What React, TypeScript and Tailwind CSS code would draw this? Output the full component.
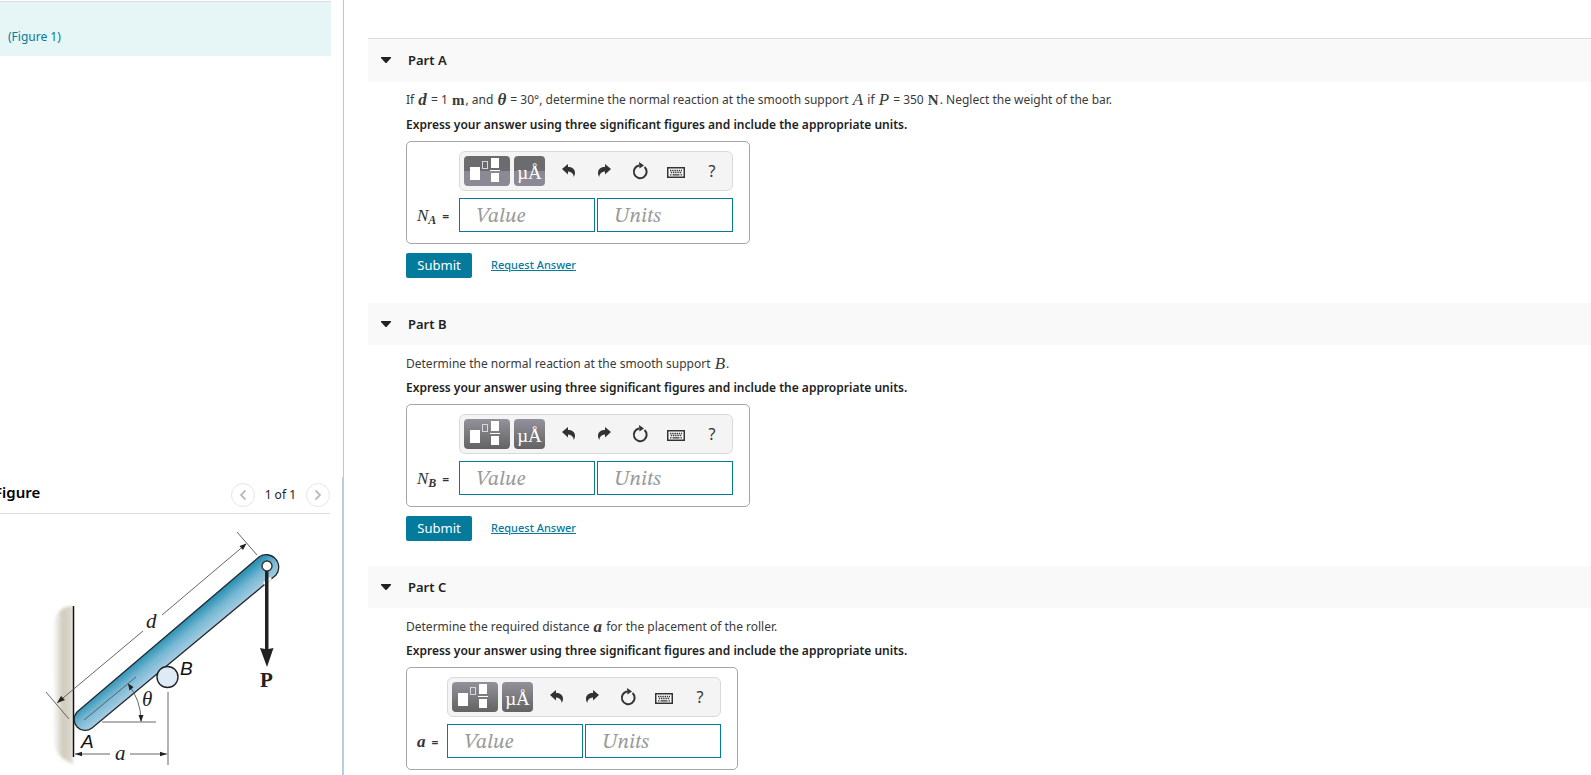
import React from "react";

const sans = "font-['Noto_Sans',sans-serif]";
const math = "font-['Liberation_Serif',serif]";
const serif = "font-['STIX_Two_Text','Liberation_Serif',serif]";

function V({ children, roman = false, bold = false }: { children: React.ReactNode; roman?: boolean; bold?: boolean }) {
  return (
    <span className={`${math} mx-px leading-4 ${roman ? "text-[15px] font-bold" : "text-[17px] italic"} ${bold ? "font-bold" : ""}`}>
      {children}
    </span>
  );
}

function TemplatesIcon() {
  return (
    <svg width="46" height="30" viewBox="0 0 46 30" aria-hidden="true">
      <rect x="6" y="11" width="10" height="13" fill="#fff" />
      <rect x="18.500" y="5.500" width="5" height="7" fill="none" stroke="#d8d8dc" />
      <rect x="27" y="2" width="8" height="10" fill="#fff" />
      <rect x="26" y="14" width="10" height="1" fill="#fff" />
      <rect x="27" y="17" width="8" height="9" fill="#fff" />
    </svg>
  );
}

function UndoIcon() {
  return (
    <svg width="14" height="14" viewBox="0 0 14 14" fill="#333" aria-hidden="true">
      <path d="M0 5 6 0V3C10 3 13 5 13 8.800c0 1.700-.6 3.200-1.300 4.200-.1-1.300-.3-2.200-.9-3C9.800 8.300 8.200 7.400 6 7.400V10.400Z" />
    </svg>
  );
}

function RedoIcon() {
  return (
    <svg width="14" height="14" viewBox="0 0 14 14" fill="#333" aria-hidden="true">
      <path d="M14 5 8 0V3C4 3 1 5 1 8.800c0 1.700.6 3.200 1.300 4.200.1-1.300.3-2.200.9-3C4.200 8.300 5.800 7.400 8 7.400V10.400Z" />
    </svg>
  );
}

function ResetIcon() {
  return (
    <svg width="16" height="18" viewBox="0 0 16 18" fill="none" aria-hidden="true">
      <path d="M12.500 5A6.400 6.400 0 1 1 7 3.500" stroke="#333" strokeWidth="2" />
      <path d="M7 0 12 3.400 7.400 6.600Z" fill="#333" />
    </svg>
  );
}

function KeyboardIcon() {
  return (
    <svg width="18" height="12" viewBox="0 0 18 12" className="mt-px" aria-hidden="true">
      <rect x="0.750" y="1.750" width="16.500" height="9.500" fill="#fff" stroke="#333" strokeWidth="1.500" />
      <path d="M3 4.500H15M3.800 6.500H15" stroke="#333" strokeWidth="1.300" strokeDasharray="1.400 .8" />
      <path d="M3 8.800H4.500M5.500 8.800H12.500M13.500 8.800H15" stroke="#333" strokeWidth="1.200" />
    </svg>
  );
}

type AnswerProps = { id: string; symbol: string; sub?: string; pressed?: boolean };

function AnswerBox({ id, symbol, sub, pressed = false }: AnswerProps) {
  const dark = pressed
    ? "bg-linear-to-b from-[#6c6c6e] from-50% to-[#8b8a94] to-50%"
    : "bg-linear-to-b from-[#93929c] to-[#636363]";
  const field =
    "h-[34px] w-[136px] border border-[#047a9c] bg-white px-4 pt-1 text-[21px] italic text-gray-700 outline-none placeholder:text-[#999]";
  return (
    <div className="flex w-fit rounded-[5px] border border-[#a6a6a6] pt-[9px] pr-4 pb-[11px] pl-[10px]">
      <div className={`flex flex-col justify-end ${sub ? "w-[42px]" : "w-[30px]"}`}>
        <label htmlFor={`${id}-value`} className="flex h-[34px] items-center pt-[2px] text-xs text-[#333]">
          <span className={`${math} text-[17px] leading-5 italic ${sub ? "" : "font-bold"}`}>
            {symbol}
            {sub && <sub className="bottom-[-3px] text-xs font-bold">{sub}</sub>}
          </span>
          <span className="ml-[6px] pt-[2px] font-semibold">=</span>
        </label>
      </div>
      <div className="flex flex-col gap-[7px]">
        <div className="flex h-10 items-center rounded-md border border-[#d9d9d9] bg-[#f4f4f4] pl-1 text-[#333]">
          <button aria-label="Templates" className={`h-[30px] w-[46px] rounded ${dark}`}>
            <TemplatesIcon />
          </button>
          <button className={`ml-1 h-[30px] w-[31px] rounded pt-1 text-[19px] leading-[26px] text-white ${math} ${dark}`}>µÅ</button>
          <button aria-label="Undo" className="flex w-[47px] justify-center"><UndoIcon /></button>
          <button aria-label="Redo" className="flex w-6 justify-center"><RedoIcon /></button>
          <button aria-label="Reset" className="flex w-12 justify-center"><ResetIcon /></button>
          <button aria-label="Keyboard" className="flex w-6 justify-center"><KeyboardIcon /></button>
          <button aria-label="Help" className="flex w-11 justify-center pl-1 text-base">?</button>
        </div>
        <div className={`flex gap-[2px] ${serif}`}>
          <input id={`${id}-value`} placeholder="Value" className={field} />
          <input aria-label="Units" placeholder="Units" className={field} />
        </div>
      </div>
    </div>
  );
}

function Part({ name, children, answer, first = false, actions = true }: {
  name: string; children: React.ReactNode; answer: AnswerProps; first?: boolean; actions?: boolean;
}) {
  return (
    <section className={actions ? "mb-[25px]" : ""}>
      <h2 className={`flex items-center bg-[#f9f9f9] pl-[13px] text-[13px] font-semibold ${first ? "h-11 border-t border-[#ddd]" : "h-[42px] pt-[2px]"}`}>
        <svg width="10" height="6" viewBox="0 0 10 6" className="mb-[2px]" aria-hidden="true"><path d="M0 0H10V1L5.500 6H4.500L0 1Z" fill="#222" /></svg>
        <span className="ml-[17px]">{name}</span>
      </h2>
      <div className="pl-[38px]">
        <p className={`flex h-[35px] items-center text-xs whitespace-pre text-[#3a3a3a] ${first ? "" : "pt-[2px]"}`}>{children}</p>
        <p className="mb-2 flex h-4 items-center text-xs font-semibold">
          Express your answer using three significant figures and include the appropriate units.
        </p>
        <AnswerBox {...answer} />
        {actions && (
          <div className="mt-[9px] flex h-[25px] items-center gap-[19px]">
            <button className="h-[25px] w-[66px] rounded-xs bg-[#047a9c] pt-px text-[13px] text-white">Submit</button>
            <a href="#" className="text-[11px] font-medium text-[#047a9c] underline">Request Answer</a>
          </div>
        )}
      </div>
    </section>
  );
}

function BarDiagram() {
  return (
    <svg width="331" height="256" viewBox="0 519 331 256" role="img" aria-label="Bar leaning on a wall and a roller">
      <defs>
        <linearGradient id="bar" gradientUnits="userSpaceOnUse" x1="168" y1="635" x2="182" y2="652">
          <stop offset="0" stopColor="#2f93b5" />
          <stop offset="0.500" stopColor="#77b8d3" />
          <stop offset="1" stopColor="#a3cbe1" />
        </linearGradient>
        <linearGradient id="wall" x1="0" x2="1">
          <stop offset="0" stopColor="#d0cbbd" stopOpacity="0" />
          <stop offset="0.500" stopColor="#d0cbbd" />
          <stop offset="1" stopColor="#dedbd0" />
        </linearGradient>
        <filter id="soft"><feGaussianBlur stdDeviation="1.500" /></filter>
      </defs>
      <path d="M73 606Q56 606 54 625Q51 660 55 700Q50 735 57 752Q62 760 73 764Z" fill="url(#wall)" filter="url(#soft)" />
      <path d="M74 606V757H79V606Z" fill="#fff" />
      <path d="M73.500 606V757" stroke="#111" strokeWidth="1.500" />
      <path d="M77 712 259 557A12.500 12.500 0 0 1 276 575L92 728A11 11 0 0 1 77 712Z" fill="url(#bar)" stroke="#222a30" strokeWidth="1.300" />
      <path d="M271 578 264 584" stroke="#fff" strokeWidth="3" />
      <g stroke="#555" strokeWidth="0.900" fill="none">
        <path d="M84 720 136 677M102 722H156M46 692 69 719M237 532 257 555" />
        <path d="M57 703 143 631M162 615 246 544" />
        <path d="M168 692V765M75 754H110M130 754H167" />
        <path d="M128 684Q141 700 141 721" />
      </g>
      <g fill="#222">
        <path d="M57 703 61 696 65 700ZM246.500 543.500 243 550 239.500 546ZM128 683.500 133.500 687 129.500 690.500ZM141 722 138.500 715H143.500ZM75 754 82 751.800V756.200ZM167 754 160 751.800V756.200Z" />
        <path d="M265 571H268.500V649L273.500 648 267 667 260 648 265 649Z" />
      </g>
      <circle cx="267" cy="566" r="5" fill="#fff" stroke="#333" strokeWidth="1.400" />
      <circle cx="167.500" cy="677" r="10.500" fill="#deebf7" stroke="#222" strokeWidth="1.400" />
      <g className="fill-[#222] font-['Liberation_Serif',serif] text-[21px]">
        <text x="146" y="628" fontStyle="italic">d</text>
        <text x="115" y="760" fontStyle="italic">a</text>
        <text x="142" y="706" fontStyle="italic">θ</text>
        <text x="260" y="687" fontWeight="bold">P</text>
      </g>
      <g className="fill-[#111] font-['Liberation_Sans',sans-serif] text-[19px] italic">
        <text x="81" y="748">A</text>
        <text x="180" y="675">B</text>
      </g>
    </svg>
  );
}

function PageButton({ next = false }: { next?: boolean }) {
  return (
    <button aria-label={next ? "Next figure" : "Previous figure"} className="flex size-6 items-center justify-center rounded-full border border-[#e6e6e6]">
      <svg width="8" height="12" viewBox="0 0 8 12" fill="none" stroke="#bbb" strokeWidth="1.800" aria-hidden="true">
        <path d={next ? "M1.500 1.500 6 6 1.500 10.500" : "M6.500 1.500 2 6 6.500 10.500"} />
      </svg>
    </button>
  );
}

export default function App() {
  return (
    <div className={`flex h-screen overflow-hidden bg-white text-[#222] ${sans}`}>
      <aside className="flex w-[344px] shrink-0 flex-col">
        <div className="flex flex-1 flex-col border-r border-[#b9c6d3] pt-px pr-3">
          <div className="flex h-[55px] items-center border-t border-[#d5dfdf] bg-[#e6f5f6] pt-4 pl-2 text-xs">
            <a href="#figure" className="text-[#047a9c]">(Figure 1)</a>
          </div>
        </div>
        <div id="figure" className="border-r-2 border-[#b8cde0] pr-3">
          <div className="flex h-[37px] items-center border-b border-[#ddd] pb-px">
            <h2 className="-ml-[6px] flex-1 pb-1 text-[15px] font-semibold text-black">Figure</h2>
            <PageButton />
            <span className="mx-[10px] text-xs">1 of 1</span>
            <PageButton next />
          </div>
          <div className="pt-[5px]"><BarDiagram /></div>
        </div>
      </aside>
      <main className="min-w-0 flex-1 pt-[38px] pl-6">
        <Part name="Part A" first answer={{ id: "a", symbol: "N", sub: "A", pressed: true }}>
          If <V bold>d</V> = 1 <V roman>m</V>, and <V bold>θ</V> = 30°, determine the normal reaction at the smooth support <V>A</V> if <V>P</V> = 350 <V roman>N</V>. Neglect the weight of the bar.
        </Part>
        <Part name="Part B" answer={{ id: "b", symbol: "N", sub: "B" }}>
          Determine the normal reaction at the smooth support <V>B</V>.
        </Part>
        <Part name="Part C" actions={false} answer={{ id: "c", symbol: "a" }}>
          Determine the required distance <V bold>a</V> for the placement of the roller.
        </Part>
      </main>
    </div>
  );
}
